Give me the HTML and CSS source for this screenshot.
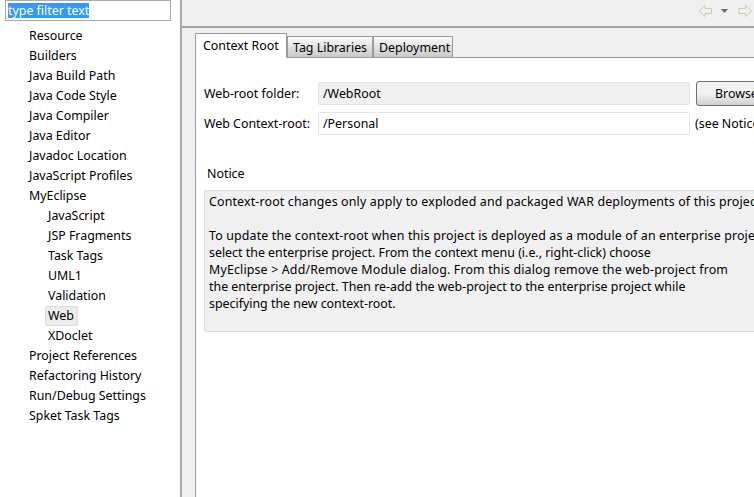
FILE: index.html
```html
<!DOCTYPE html>
<html>
<head>
<meta charset="utf-8">
<title>Properties</title>
<link rel="stylesheet" href="styles.css">
</head>
<body>
<div class="app">
  <aside class="side">
    <div class="filter"><span class="sel">type filter text</span></div>
    <ul class="tree">
      <li>Resource</li>
      <li>Builders</li>
      <li>Java Build Path</li>
      <li>Java Code Style</li>
      <li>Java Compiler</li>
      <li>Java Editor</li>
      <li>Javadoc Location</li>
      <li>JavaScript Profiles</li>
      <li>MyEclipse</li>
      <li class="sub">JavaScript</li>
      <li class="sub">JSP Fragments</li>
      <li class="sub">Task Tags</li>
      <li class="sub">UML1</li>
      <li class="sub">Validation</li>
      <li class="sub"><span class="cur">Web</span></li>
      <li class="sub">XDoclet</li>
      <li>Project References</li>
      <li>Refactoring History</li>
      <li>Run/Debug Settings</li>
      <li>Spket Task Tags</li>
    </ul>
  </aside>
  <main class="main">
    <header class="head">
      <svg class="nav" width="56" height="14" viewBox="0 0 56 14">
        <path d="M1 7 L7 1.5 V4.5 H13.5 V9.5 H7 V12.5 Z" fill="#f3f3e8" stroke="#c9c9bd"/>
        <path d="M23 5 H30 L26.5 9 Z" fill="#6b6b6b"/>
        <path d="M53.5 7 L47.5 1.5 V4.5 H41 V9.5 H47.5 V12.5 Z" fill="#f3f3e8" stroke="#c9c9bd"/>
      </svg>
    </header>
    <div class="folder">
      <div class="tabs">
        <div class="tab on">Context Root</div>
        <div class="tab">Tag Libraries</div>
        <div class="tab">Deployment</div>
      </div>
      <div class="page">
        <div class="row first">
          <label class="lbl">Web-root folder:</label>
          <div class="field ro">/WebRoot</div>
          <div class="btn">Browse...</div>
        </div>
        <div class="row">
          <label class="lbl">Web Context-root:</label>
          <div class="field">/Personal</div>
          <div class="hint">(see Notice)</div>
        </div>
        <div class="notice-t">Notice</div>
        <div class="notice">
          <p class="wide">Context-root changes only apply to exploded and packaged WAR deployments of this project.</p>
          <p class="gap wide">To update the context-root when this project is deployed as a module of an enterprise project,</p>
          <p>select the enterprise project. From the context menu (i.e., right-click) choose</p>
          <p class="wide">MyEclipse &gt; Add/Remove Module dialog. From this dialog remove the web-project from</p>
          <p>the enterprise project. Then re-add the web-project to the enterprise project while</p>
          <p>specifying the new context-root.</p>
        </div>
      </div>
    </div>
  </main>
</div>
</body>
</html>
```

FILE: styles.css
```css
* { box-sizing: border-box; }
html, body { margin: 0; padding: 0; height: 100%; overflow: hidden; }
body { font: 12.4px/17px "Noto Sans", "Open Sans", sans-serif; color: #000; background: #fff; }
.app { display: flex; width: 754px; height: 497px; overflow: hidden; }
.side { width: 182px; flex: none; border-right: 2px solid #a9a9a9; padding-left: 5px; }
.filter { width: 166px; height: 21px; border: 1px solid #a9a9b0; padding: 2px; display: flex; }
.sel { background: #3399ff; color: #fff; line-height: 15px; height: 15px; width: 81px; white-space: nowrap; }
.tree { list-style: none; margin: 5px 0 0; padding: 0 0 0 24px; }
.tree li { height: 20px; line-height: 20px; white-space: nowrap; }
.tree li.sub { padding-left: 19px; }
.cur { display: inline-block; margin-left: -3px; padding: 0 2px; height: 20px; width: 33px; background: #ececec; border: 1px solid #dcdcdc; border-radius: 2px; line-height: 18px; }
.main { flex: 1; min-width: 0; display: flex; flex-direction: column; background: #f0f0f0; }
.head { height: 28px; flex: none; border-bottom: 2px solid #a0a0a0; display: flex; justify-content: flex-end; padding: 4px 0 0; }
.folder { flex: 1; min-height: 0; margin-left: 13px; display: flex; flex-direction: column; min-width: 560px; }
.tabs { height: 30px; flex: none; display: flex; align-items: flex-end; padding-top: 6px; border-bottom: 1px solid #9a9aa2; }
.tab { height: 21px; padding: 0 0 0 5px; line-height: 21px; border: 1px solid #9a9aa2; border-bottom: none; background: linear-gradient(#fafafa, #c9c9c9); white-space: nowrap; }
.tab.on { height: 25px; width: 92px; padding: 2px 0 0 7px; line-height: 20px; background: #fff; margin-bottom: -1px; }
.tab:nth-child(2) { width: 86px; }
.tab:nth-child(3) { width: 80px; }
.page { flex: 1; min-height: 0; background: #fff; border-left: 1px solid #9a9aa2; padding: 24px 0 0 8px; width: 560px; }
.row { display: flex; align-items: center; height: 23px; margin-bottom: 7px; }
.lbl { width: 114px; flex: none; white-space: nowrap; }
.field { width: 372px; height: 23px; flex: none; border: 1px solid #e3e3e3; border-radius: 2px; padding-left: 4px; line-height: 21px; background: #fff; }
.field.ro { background: #f0f0f0; }
.btn { margin-left: 6px; width: 110px; height: 25px; flex: none; border: 1px solid #707070; border-radius: 3px; background: linear-gradient(#f2f2f2 50%, #d0d0d0); padding-left: 18px; line-height: 23px; white-space: nowrap; }
.hint { margin-left: 5px; white-space: nowrap; }
.notice-t { margin: 30px 0 8px 3px; }
.notice { width: 552px; height: 142px; background: #f0f0f0; border: 1px solid #dcdcdc; border-radius: 2px; padding: 2px 4px; white-space: nowrap; overflow: hidden; }
.notice p { margin: 0; }
.notice p.gap { margin-top: 17px; }
.notice p.wide { letter-spacing: .16px; }
```
